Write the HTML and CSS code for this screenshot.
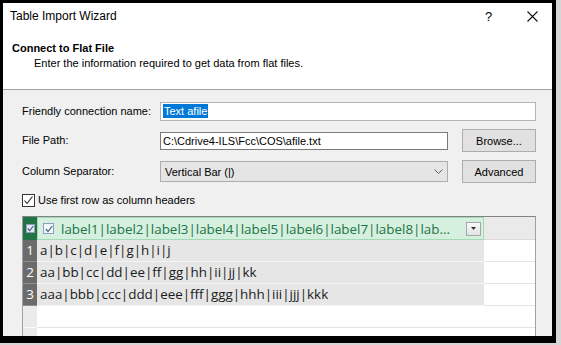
FILE: index.html
```html
<!DOCTYPE html>
<html>
<head>
<meta charset="utf-8">
<link rel="stylesheet" href="styles.css">
</head>
<body>
<div class="window">
  <div class="titlebar">
    <span class="title">Table Import Wizard</span>
    <span class="help">?</span>
    <svg class="close" width="11" height="11" viewBox="0 0 11 11"><path d="M0.5 0.5 L10.5 10.5 M10.5 0.5 L0.5 10.5" stroke="#111" stroke-width="1.1" fill="none"/></svg>
  </div>
  <div class="header">
    <div class="heading">Connect to Flat File</div>
    <div class="sub">Enter the information required to get data from flat files.</div>
  </div>
  <div class="content">
    <div class="form">
      <div class="lbl">Friendly connection name:</div>
      <div class="input wide"><span class="selected">Text afile</span></div>
      <div class="lbl">File Path:</div>
      <div class="input path">C:\Cdrive4-ILS\Fcc\COS\afile.txt</div>
      <div class="btn">Browse...</div>
      <div class="lbl">Column Separator:</div>
      <div class="select"><span>Vertical Bar (|)</span><svg width="9" height="5" viewBox="0 0 9 5"><path d="M0.5 0.5 L4.5 4.5 L8.5 0.5" stroke="#606060" stroke-width="1" fill="none"/></svg></div>
      <div class="btn">Advanced</div>
    </div>
    <div class="check">
      <span class="box"><svg width="11" height="11" viewBox="0 0 11 11"><path d="M1.5 5.5 L4 8.5 L9.5 1.5" stroke="#222" stroke-width="1.1" fill="none"/></svg></span>
      <span>Use first row as column headers</span>
    </div>
    <div class="grid">
      <div class="corner"><span class="mini"><svg width="7" height="7" viewBox="0 0 7 7"><path d="M0.8 3.5 L2.8 5.6 L6.3 1" stroke="#4a5f8a" stroke-width="1.1" fill="none"/></svg></span></div>
      <div class="hcell">
        <span class="hbox"><svg width="8" height="8" viewBox="0 0 8 8"><path d="M0.8 4 L3 6.5 L7.2 1" stroke="#4a5f8a" stroke-width="1.2" fill="none"/></svg></span>
        <span class="htext">label1|label2|label3|label4|label5|label6|label7|label8|lab...</span>
        <span class="dd"><svg width="5" height="3" viewBox="0 0 5 3"><path d="M0 0 H5 L2.5 3 Z" fill="#333"/></svg></span>
      </div>
      <div class="hrest"></div>

      <div class="rnum">1</div><div class="dcell">a|b|c|d|e|f|g|h|i|j</div><div class="rest"></div>
      <div class="rnum">2</div><div class="dcell">aa|bb|cc|dd|ee|ff|gg|hh|ii|jj|kk</div><div class="rest"></div>
      <div class="rnum">3</div><div class="dcell">aaa|bbb|ccc|ddd|eee|fff|ggg|hhh|iii|jjj|kkk</div><div class="rest"></div>
      <div class="enum"></div><div class="ecell"></div><div class="rest"></div>
      <div class="enum"></div><div class="ecell"></div><div class="rest"></div>
    </div>
  </div>
</div>
</body>
</html>
```

FILE: styles.css
```css
* { box-sizing: border-box; }
html, body { margin: 0; padding: 0; }
body {
  width: 561px;
  height: 345px;
  overflow: hidden;
  background: #d6d6d6;
  font-family: "Liberation Sans", Arial, sans-serif;
  font-size: 11px;
  color: #000;
}
.window {
  width: 556px;
  height: 343px;
  border-style: solid;
  border-color: #000;
  border-width: 3px 4px 7px 3px;
  background: #f0f0f0;
  display: flex;
  flex-direction: column;
  overflow: hidden;
}
.titlebar {
  height: 27px;
  flex: none;
  background: #fff;
  display: flex;
  align-items: center;
  padding-left: 7px;
}
.title { font-size: 12px; line-height: 27px; flex: 1; }
.help { font-size: 13px; width: 42px; margin-top: -1px; }
.close { margin-right: 14px; margin-top: -1px; }
.header {
  height: 60px;
  flex: none;
  background: #fff;
  padding: 11px 0 0 9px;
  border-bottom: 1px solid #a0a0a0;
}
.heading { font-weight: bold; line-height: 14px; }
.sub { line-height: 14px; margin-top: 1px; padding-left: 22px; }
.content {
  flex: 1;
  padding: 12px 16px 0 19px;
  overflow: hidden;
}
.form {
  display: grid;
  grid-template-columns: 138px 288px 14px 74px;
  grid-template-rows: 19px 23px 23px;
  row-gap: 8px;
}
.lbl { grid-column: 1; align-self: center; line-height: 13px; }
.input {
  background: #fff;
  border: 1px solid #7a7a7a;
  grid-column: 2;
  align-self: center;
  padding-left: 2px;
  line-height: 16px;
  white-space: nowrap;
}
.input.wide {
  grid-column: 2 / 5;
  height: 19px;
  border-color: #b4b4b4;
  padding-top: 1px;
  line-height: 15px;
}
.input.path { height: 18px; }
.selected { background: #0078d7; color: #fff; padding: 1px 1px; }
.select {
  grid-column: 2;
  align-self: center;
  height: 21px;
  background: #e5e5e5;
  border: 1px solid #adadad;
  display: flex;
  align-items: center;
  justify-content: space-between;
  padding: 0 4px 0 4px;
}
.btn {
  grid-column: 4;
  height: 23px;
  background: #e1e1e1;
  border: 1px solid #adadad;
  display: flex;
  align-items: center;
  justify-content: center;
}
.check {
  margin-top: 11px;
  height: 13px;
  display: flex;
  align-items: center;
  gap: 3px;
  line-height: 13px;
}
.box {
  width: 13px;
  height: 13px;
  border: 1px solid #333;
  background: #fff;
  display: flex;
  align-items: center;
  justify-content: center;
}
.grid {
  margin-top: 9px;
  width: 514px;
  height: 140px;
  border-top: 1px solid #828282;
  border-left: 1px solid #a0a0a0;
  border-right: 1px solid #a0a0a0;
  display: grid;
  grid-template-columns: 14px 447px 1fr;
  grid-template-rows: 23px repeat(5, 22px);
  font-family: "Open Sans", Lato, sans-serif;
  font-size: 13.4px;
  background: #fff;
}
.corner {
  background: #217346;
  display: flex;
  align-items: center;
  justify-content: center;
}
.mini {
  width: 9px;
  height: 9px;
  background: #dfe6f2;
  border: 1px solid #8d9fbd;
  display: flex;
  align-items: center;
  justify-content: center;
}
.hcell {
  background: #d6f0df;
  border: 1px solid #a4d9b6;
  display: flex;
  align-items: center;
  padding-left: 5px;
  color: #217346;
}
.hbox {
  width: 11px;
  height: 11px;
  background: #f4f7fb;
  border: 1px solid #8d9fbd;
  display: flex;
  align-items: center;
  justify-content: center;
  margin-right: 7px;
}
.htext { flex: 1; white-space: nowrap; }
.dd {
  width: 15px;
  height: 14px;
  border: 1px solid #a6a6a6;
  background: linear-gradient(#fafafa, #e2e2e2);
  margin-right: 2px;
  display: flex;
  align-items: center;
  justify-content: center;
}
.hrest { background: #eaeaea; border-bottom: 1px solid #dadada; }
.rnum {
  background: #6b6b6b;
  color: #fff;
  border-bottom: 1px solid #8e8e8e;
  text-align: center;
  line-height: 21px;
}
.dcell {
  background: #e6e6e6;
  border-bottom: 1px solid #f6f6f6;
  color: #1a1a1a;
  padding-left: 3px;
  line-height: 21px;
  white-space: nowrap;
}
.rest { background: #fff; border-bottom: 1px solid #e4e4e4; }
.enum { background: #ebebeb; border-bottom: 1px solid #f8f8f8; }
.ecell { background: #fff; border-bottom: 1px solid #e4e4e4; }
```
